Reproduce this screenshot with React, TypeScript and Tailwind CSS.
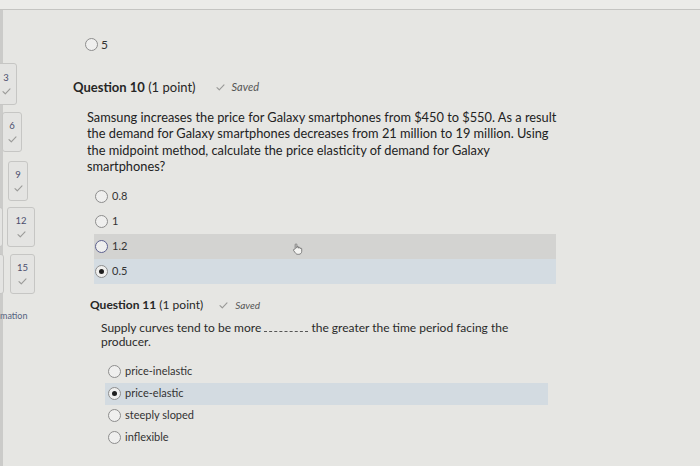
import React from "react";

function Radio({ state }: { state?: "hover" | "checked" }) {
  const border = state === "hover" ? "border-[#5d618f]" : "border-[#8d8d8d]";
  return (
    <span
      className={`flex h-[13px] w-[13px] shrink-0 items-center justify-center rounded-full border bg-[#efefee] ${border}`}
    >
      {state === "checked" && <span className="h-[5px] w-[5px] rounded-full bg-[#1e1e1e]" />}
    </span>
  );
}

function Check({ className = "" }: { className?: string }) {
  return (
    <svg viewBox="0 0 10 8" className={className} fill="none" stroke="currentColor" strokeWidth="1.3">
      <path d="M1 4.2 L3.6 6.6 L9 1" strokeLinecap="round" strokeLinejoin="round" />
    </svg>
  );
}

function NavCard({ n, w, h = 40 }: { n?: string; w: number; h?: number }) {
  return (
    <div
      className="flex shrink-0 flex-col items-center justify-center gap-[6px] rounded-[3px] border border-[#c6c6c4] bg-[#e4e4e2]"
      style={{ width: w, height: h }}
    >
      {n && <span className="text-[9.5px] leading-none text-[#4c4f6e]">{n}</span>}
      {n && <Check className="h-[7px] w-[9px] text-[#9c9c9a]" />}
    </div>
  );
}

function Saved({ size }: { size: string }) {
  return (
    <span className={`flex items-center gap-[7px] italic text-[#555] ${size}`}>
      <Check className="h-[7px] w-[9px] text-[#9a9a98]" />
      Saved
    </span>
  );
}

// hand pointer shown over the hovered row
function HandCursor() {
  return (
    <svg viewBox="0 0 12 13" className="h-[12px] w-[11px]" fill="#f4f4f2" stroke="#6a6a6a" strokeWidth="0.9">
      <path
        d="M3.5 6.5 V1.8 a0.9 0.9 0 0 1 1.8 0 V5.5 V4.6 a0.9 0.9 0 0 1 1.8 0 V5.6 a0.9 0.9 0 0 1 1.8 0 V6.2 a0.9 0.9 0 0 1 1.7 0 V9 c0 2 -1.4 3.3 -3.3 3.3 H6.4 C5 12.3 4.2 11.6 3.5 10.6 L1.6 7.9 a0.9 0.9 0 0 1 1.4 -1 Z"
        strokeLinejoin="round"
      />
    </svg>
  );
}

export default function App() {
  const q10 = [
    { t: "0.8", s: undefined, bg: "" },
    { t: "1", s: undefined, bg: "" },
    { t: "1.2", s: "hover" as const, bg: "bg-[#d3d3d1]" },
    { t: "0.5", s: "checked" as const, bg: "bg-[#d4dce2]" },
  ];
  const q11 = [
    { t: "price-inelastic", s: undefined, bg: "" },
    { t: "price-elastic", s: "checked" as const, bg: "bg-[#d3dbe1]" },
    { t: "steeply sloped", s: undefined, bg: "" },
    { t: "inflexible", s: undefined, bg: "" },
  ];

  return (
    <div
      className="flex h-[466px] w-[700px] flex-col overflow-hidden bg-[#e6e6e3] text-[#262626]"
      style={{ fontFamily: "Lato, 'Open Sans', sans-serif" }}
    >
      <div className="h-[10px] shrink-0 border-b border-[#c4c4c2] bg-[#ebebe9]" />

      <div className="flex flex-1">
        {/* sidebar */}
        <div className="flex w-[60px] shrink-0 flex-col border-l-[3px] border-[#cbcbc9] pt-[53px]">
          <div className="-ml-[8px]">
            <NavCard n="3" w={22} h={42} />
          </div>
          <div className="mt-[7px] ml-[-1px]">
            <NavCard n="6" w={20} />
          </div>
          <div className="mt-[9px] ml-[5px]">
            <NavCard n="9" w={20} />
          </div>
          <div className="mt-[6px] -ml-[25px] flex gap-[4px]">
            <NavCard w={25} />
            <NavCard n="12" w={28} />
          </div>
          <div className="mt-[7px] -ml-[24px] flex gap-[6px]">
            <NavCard w={25} />
            <NavCard n="15" w={25} />
          </div>
          <span className="mt-[17px] -ml-[3px] text-[9px] leading-none text-[#55627f]">mation</span>
        </div>

        {/* main */}
        <div className="flex flex-1 flex-col">
          <div className="mt-[28px] ml-[25px] flex items-center gap-[3px]">
            <Radio />
            <span className="text-[12px] leading-none text-[#333]">5</span>
          </div>

          <div className="mt-[28px] ml-[13px] flex items-center gap-[20px]">
            <h2 className="text-[13px] leading-none">
              <span className="font-bold">Question 10</span> (1 point)
            </h2>
            <Saved size="text-[11px]" />
          </div>

          <p className="mt-[13px] ml-[27px] text-[12.8px] leading-[16.5px] text-[#222]">
            Samsung increases the price for Galaxy smartphones from $450 to $550. As a result
            <br />
            the demand for Galaxy smartphones decreases from 21 million to 19 million. Using
            <br />
            the midpoint method, calculate the price elasticity of demand for Galaxy
            <br />
            smartphones?
          </p>

          <div className="mt-[9px] ml-[34px] mr-[144px] flex flex-col">
            {q10.map((o) => (
              <div key={o.t} className={`relative flex h-[25px] items-center gap-[4px] pl-[1px] ${o.bg}`}>
                <Radio state={o.s} />
                <span className="text-[11px] text-[#333]">{o.t}</span>
                {o.t === "1.2" && (
                  <span className="absolute left-[198px] top-[9px]">
                    <HandCursor />
                  </span>
                )}
              </div>
            ))}
          </div>

          <div className="mt-[14px] ml-[30px] flex items-center gap-[16px]">
            <h2 className="text-[12px] leading-none">
              <span className="font-bold">Question 11</span> (1 point)
            </h2>
            <Saved size="text-[10px]" />
          </div>

          <p className="mt-[8px] ml-[41px] text-[12px] leading-[14px] text-[#2a2a2a]">
            Supply curves tend to be more{" "}
            <span className="inline-block w-[44px] border-b border-dashed border-[#555] align-baseline" />{" "}
            the greater the time period facing the
            <br />
            producer.
          </p>

          <div className="mt-[12px] ml-[45px] mr-[152px] flex flex-col">
            {q11.map((o) => (
              <div key={o.t} className={`flex h-[22px] items-center gap-[4px] pl-[3px] ${o.bg}`}>
                <Radio state={o.s} />
                <span className="text-[11px] text-[#333]">{o.t}</span>
              </div>
            ))}
          </div>
        </div>
      </div>
    </div>
  );
}
